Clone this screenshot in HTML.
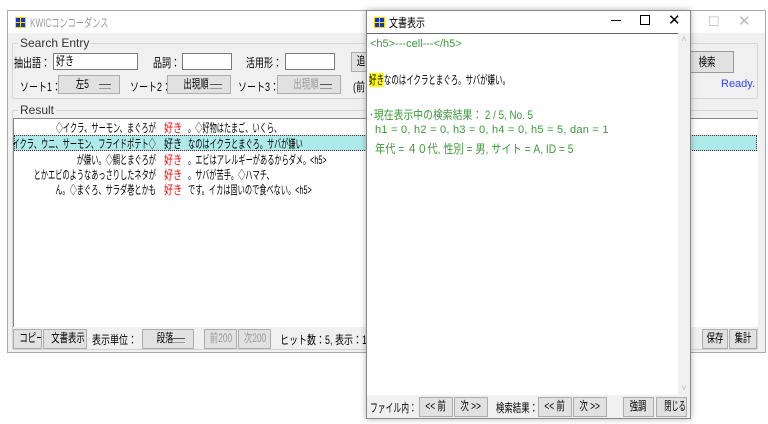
<!DOCTYPE html>
<html><head><meta charset="utf-8"><style>
*{margin:0;padding:0;box-sizing:border-box}
body{width:768px;height:424px;background:#fff;position:relative;overflow:hidden;font-family:"Liberation Sans","Noto Sans CJK JP",sans-serif;font-size:11px;color:#000}
.a{position:absolute;white-space:nowrap;transform-origin:left center}
.r{transform-origin:right center}
.win{position:absolute;background:#f0f0f0;border:1px solid #aaa}
.btn{position:absolute;background:#e1e1e1;border:1px solid #adadad;text-align:center;font-size:12px;line-height:17px;white-space:nowrap;overflow:hidden}
.btn span,.cb span{display:inline-block;transform:scaleX(.7)}
.grp{position:absolute;border:1px solid #d5d5d5;border-radius:2px}
.inp{position:absolute;background:#fff;border:1px solid #7a7a7a;height:17px;line-height:15px;padding-left:2px;font-size:12px}
.inp span{display:inline-block;transform:scaleX(.75);transform-origin:left}
.cb{position:absolute;background:#e1e1e1;border:1px solid #adadad;height:19px;line-height:17px;padding-left:10px;font-size:12px;white-space:nowrap}
.cb:after{content:"";position:absolute;right:8px;top:8px;width:12px;height:3px;border-top:1px solid #555;border-bottom:1px solid #999}
.kw{color:#f00}
.icon{position:absolute;width:11px;height:11px;background:#ffd800;}
.icon:before{content:"";position:absolute;left:1px;top:1px;width:9px;height:9px;background:linear-gradient(90deg,#1036c8 4px,#ffd800 4px,#ffd800 5px,#1036c8 5px)}
.icon:after{content:"";position:absolute;left:1px;top:5px;width:9px;height:1px;background:#ffd800}
.g{color:#3a9a3a}
.l{font-size:12px;transform:scaleX(.75)}
.row{font-size:12px;transform:scaleX(.6)}
</style></head><body>
<div class="win" style="left:7px;top:10px;width:759px;height:343px">
 <div class="a" style="left:0;top:0;width:757px;height:22px;background:#fff"></div>
 <div class="icon" style="left:7px;top:6px"></div>
 <div class="a" style="left:22px;top:3px;color:#999;font-size:12px;transform:scaleX(.68)">KWICコンコーダンス</div>
 <div class="a" style="left:700px;top:3px;color:#bbb;font-size:13px">☐</div>
 <div class="a" style="left:730px;top:1px;color:#bbb;font-size:15px">✕</div>
 <div class="grp" style="left:4px;top:32px;width:746px;height:56px"></div>
 <div class="a" style="left:10px;top:25px;background:#f0f0f0;padding:0 2px;color:#333;font-size:12px">Search Entry</div>
 <div class="a l" style="left:6px;top:43px">抽出語：</div>
 <div class="inp" style="left:45px;top:42px;width:85px"><span>好き</span></div>
 <div class="a l" style="left:145px;top:43px">品詞：</div>
 <div class="inp" style="left:174px;top:42px;width:50px"></div>
 <div class="a l" style="left:238px;top:43px">活用形：</div>
 <div class="inp" style="left:277px;top:42px;width:50px"></div>
 <div class="btn" style="left:343px;top:41px;width:20px;height:20px"><span>追</span></div>
 <div class="a l" style="left:12px;top:67px">ソート1：</div>
 <div class="cb" style="left:50px;top:64px;width:62px;padding-left:14px"><span>左5</span></div>
 <div class="a l" style="left:122px;top:67px">ソート2：</div>
 <div class="cb" style="left:159px;top:64px;width:64px"><span>出現順</span></div>
 <div class="a l" style="left:230px;top:67px">ソート3：</div>
 <div class="cb" style="left:269px;top:64px;width:64px;color:#999"><span>出現順</span></div>
 <div class="a l" style="left:345px;top:67px">(前</div>
 <div class="btn" style="left:673px;top:40px;width:53px;height:22px;line-height:20px;border-color:#999"><span>検索</span></div>
 <div class="a" style="left:713px;top:67px;color:#3344ff">Ready.</div>
 <div class="grp" style="left:4px;top:99px;width:746px;height:240px"></div>
 <div class="a" style="left:10px;top:92px;background:#f0f0f0;padding:0 2px;color:#333;font-size:12px">Result</div>
 <div class="a" style="left:5px;top:107px;width:745px;height:209px;background:#fff;border-top:1px solid #888;border-left:1px solid #888"></div>
 <div class="a" style="left:6px;top:124px;width:743px;height:16px;background:#aeeaea;border:1px dotted #333"></div>
 <div class="a r row" style="right:609px;top:108px">◇イクラ、サーモン、まぐろが</div>
 <div class="a r row" style="right:609px;top:124px">イクラ、ウニ、サーモン、フライドポテト◇</div>
 <div class="a r row" style="right:609px;top:140px">が嫌い。◇鯛とまぐろが</div>
 <div class="a r row" style="right:609px;top:155px">とかエビのようなあっさりしたネタが</div>
 <div class="a r row" style="right:609px;top:170px">ん。◇まぐろ、サラダ巻とかも</div>
 <div class="a kw l" style="left:156px;top:108px">好き</div>
 <div class="a l" style="left:156px;top:124px">好き</div>
 <div class="a kw l" style="left:156px;top:140px">好き</div>
 <div class="a kw l" style="left:156px;top:155px">好き</div>
 <div class="a kw l" style="left:156px;top:170px">好き</div>
 <div class="a row" style="left:180px;top:108px">。◇好物はたまご、いくら、</div>
 <div class="a row" style="left:180px;top:124px">なのはイクラとまぐろ。サバが嫌い</div>
 <div class="a row" style="left:180px;top:140px">。エビはアレルギーがあるからダメ。&lt;h5&gt;</div>
 <div class="a row" style="left:180px;top:155px">。サバが苦手。◇ハマチ、</div>
 <div class="a row" style="left:180px;top:170px">です。イカは固いので食べない。&lt;h5&gt;</div>
 <div class="btn" style="left:5px;top:318px;width:29px;height:20px"><span>コピー</span></div>
 <div class="btn" style="left:35px;top:318px;width:44px;height:20px"><span>文書表示</span></div>
 <div class="a l" style="left:84px;top:320px">表示単位：</div>
 <div class="cb" style="left:134px;top:318px;width:52px;height:20px"><span>段落</span></div>
 <div class="btn" style="left:196px;top:318px;width:33px;height:20px;color:#999"><span>前200</span></div>
 <div class="btn" style="left:230px;top:318px;width:33px;height:20px;color:#999"><span>次200</span></div>
 <div class="a l" style="left:272px;top:320px">ヒット数：5, 表示：1-</div>
 <div class="btn" style="left:694px;top:318px;width:26px;height:20px"><span>保存</span></div>
 <div class="btn" style="left:721px;top:318px;width:28px;height:20px"><span>集計</span></div>
</div>
<div class="win" style="left:366px;top:10px;width:325px;height:409px;border-color:#888;box-shadow:0 0 6px rgba(0,0,0,.3)">
 <div class="a" style="left:0;top:0;width:323px;height:22px;background:#fff"></div>
 <div class="icon" style="left:7px;top:6px"></div>
 <div class="a l" style="left:22px;top:3px">文書表示</div>
 <div class="a" style="left:244px;top:9px;width:10px;height:1px;background:#000"></div>
 <div class="a" style="left:273px;top:4px;width:10px;height:10px;border:1px solid #000"></div>
 <div class="a" style="left:301px;top:0px;font-size:15px">✕</div>
 <div class="a" style="left:0;top:22px;width:311px;height:362px;background:#fff;border-top:1px solid #666"></div>
 <div class="a" style="left:311px;top:23px;width:12px;height:361px;background:#f0f0f0;color:#bbb;font-size:9px;text-align:center">˄</div>
 <div class="a" style="left:311px;top:372px;width:12px;color:#bbb;font-size:9px;text-align:center">˅</div>
 <div class="a g" style="left:3px;top:27px">&lt;h5&gt;---cell---&lt;/h5&gt;</div>
 <div class="a" style="left:2px;top:60px;font-size:12px;transform:scaleX(.62)"><span style="background:#ff0">好き</span>なのはイクラとまぐろ。サバが嫌い。</div>
 <div class="a g" style="left:2px;top:95px;font-size:12px;transform:scaleX(.82)">･現在表示中の検索結果： 2 / 5,  No. 5</div>
 <div class="a g" style="left:8px;top:113px;letter-spacing:.25px">h1 = 0,  h2 = 0,  h3 = 0,  h4 = 0,  h5 = 5,  dan = 1</div>
 <div class="a g" style="left:8px;top:129px;font-size:12px;transform:scaleX(.85)">年代 = ４０代,  性別 = 男,  サイト = A,  ID = 5</div>
 <div class="a l" style="left:3px;top:388px;transform:scaleX(.65)">ファイル内：</div>
 <div class="btn" style="left:52px;top:386px;width:34px;height:20px"><span>&lt;&lt; 前</span></div>
 <div class="btn" style="left:87px;top:386px;width:34px;height:20px"><span>次 &gt;&gt;</span></div>
 <div class="a l" style="left:129px;top:388px;transform:scaleX(.7)">検索結果：</div>
 <div class="btn" style="left:171px;top:386px;width:34px;height:20px"><span>&lt;&lt; 前</span></div>
 <div class="btn" style="left:206px;top:386px;width:34px;height:20px"><span>次 &gt;&gt;</span></div>
 <div class="btn" style="left:256px;top:386px;width:31px;height:20px"><span>強調</span></div>
 <div class="btn" style="left:289px;top:386px;width:31px;height:20px"><span style="transform:scaleX(.6)">閉じる</span></div>
</div>
</body></html>
